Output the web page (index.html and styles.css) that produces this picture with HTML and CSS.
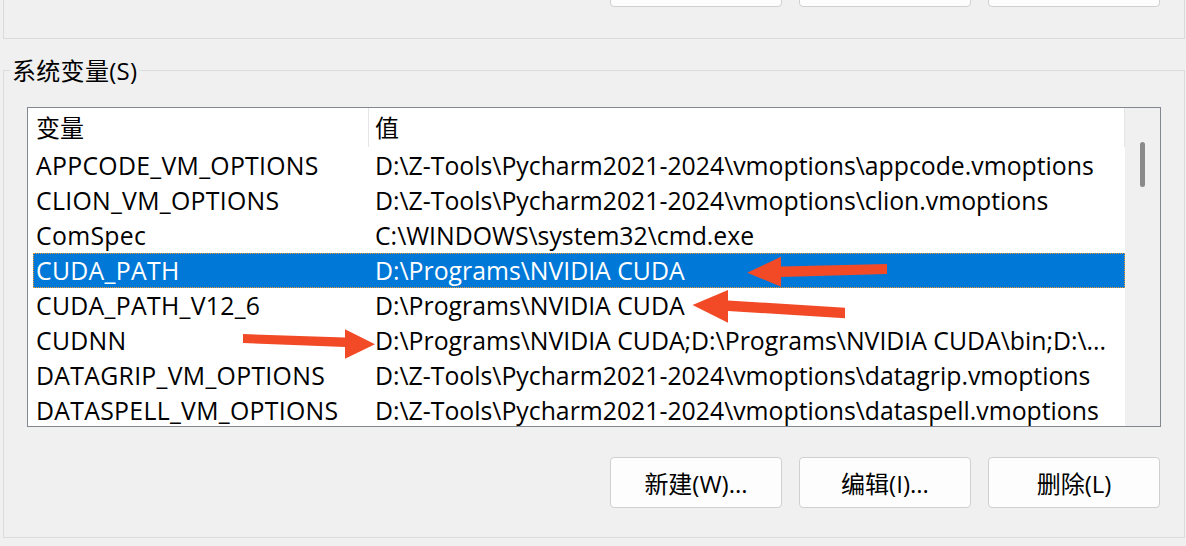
FILE: index.html
```html
<!DOCTYPE html>
<html lang="zh-CN">
<head>
<meta charset="utf-8">
<title>环境变量</title>
<link rel="stylesheet" href="styles.css">
</head>
<body>
<div class="window">
  <div class="user-group">
    <div class="btn-row btn-row-top">
      <button class="btn" aria-label="新建(N)..."></button>
      <button class="btn" aria-label="编辑(E)..."></button>
      <button class="btn" aria-label="删除(D)"></button>
    </div>
  </div>

  <fieldset class="sys-group">
    <legend class="sys-legend">系统变量(S)</legend>
    <div class="list">
      <div class="list-main">
        <div class="list-header">
          <div class="hcell hcell-name">变量</div>
          <div class="hcell hcell-value">值</div>
        </div>
        <div class="list-body">
          <div class="row"><span class="cell cell-name">APPCODE_VM_OPTIONS</span><span class="cell cell-value">D:\Z-Tools\Pycharm2021-2024\vmoptions\appcode.vmoptions</span></div>
          <div class="row"><span class="cell cell-name">CLION_VM_OPTIONS</span><span class="cell cell-value">D:\Z-Tools\Pycharm2021-2024\vmoptions\clion.vmoptions</span></div>
          <div class="row"><span class="cell cell-name">ComSpec</span><span class="cell cell-value">C:\WINDOWS\system32\cmd.exe</span></div>
          <div class="row row-selected"><span class="cell cell-name">CUDA_PATH</span><span class="cell cell-value">D:\Programs\NVIDIA CUDA</span></div>
          <div class="row"><span class="cell cell-name">CUDA_PATH_V12_6</span><span class="cell cell-value">D:\Programs\NVIDIA CUDA</span></div>
          <div class="row"><span class="cell cell-name">CUDNN</span><span class="cell cell-value">D:\Programs\NVIDIA CUDA;D:\Programs\NVIDIA CUDA\bin;D:\...</span></div>
          <div class="row"><span class="cell cell-name">DATAGRIP_VM_OPTIONS</span><span class="cell cell-value">D:\Z-Tools\Pycharm2021-2024\vmoptions\datagrip.vmoptions</span></div>
          <div class="row"><span class="cell cell-name">DATASPELL_VM_OPTIONS</span><span class="cell cell-value">D:\Z-Tools\Pycharm2021-2024\vmoptions\dataspell.vmoptions</span></div>
        </div>
      </div>
      <div class="scrollbar"><div class="thumb"></div></div>
    </div>
    <div class="btn-row btn-row-bottom">
      <button class="btn">新建(W)...</button>
      <button class="btn">编辑(I)...</button>
      <button class="btn">删除(L)</button>
    </div>
  </fieldset>

  <svg class="annotations" width="1186" height="546" viewBox="0 0 1186 546" aria-hidden="true">
    <polygon class="arrow" points="887,264 781,266.5 781,256.7 747.3,272.7 781,286.7 781,277 887,274"/>
    <polygon class="arrow" points="845,307.7 728,300.5 728,290 692.5,305 728,322.7 728,311 845,318.3"/>
    <polygon class="arrow" points="243,334 345,337.5 345,329.3 375,344.3 345,358.7 345,347 243,343"/>
  </svg>
</div>
</body>
</html>
```

FILE: styles.css
```css
* {
  box-sizing: border-box;
}

html, body {
  margin: 0;
  padding: 0;
}

body {
  background: #f0f0f0;
  font-family: "Open Sans", "Noto Sans CJK SC", sans-serif;
  font-size: 24.8px;
  color: #000;
  overflow: hidden;
}

.window {
  position: relative;
  width: 1186px;
  height: 546px;
  overflow: hidden;
}

/* upper (user variables) group, mostly scrolled out of view */
.user-group {
  display: flow-root;
  margin-left: 3px;
  width: 1182px;
  height: 39px;
  border: 1px solid #dadada;
  border-top: none;
}

.btn-row {
  display: flex;
  justify-content: flex-end;
  gap: 17px;
  padding-right: 24px;
}

.btn-row-top {
  margin-top: -44px;
}

.btn {
  width: 172px;
  height: 51px;
  background: #fdfdfd;
  border: 1px solid #d0d0d0;
  border-radius: 4px;
  font-family: "Open Sans", "Noto Sans CJK SC", sans-serif;
  font-size: 24px;
  color: #000;
  padding: 0;
}

/* system variables group */
.sys-group {
  margin: 18px 0 0 3px;
  width: 1182px;
  min-width: 0;
  padding: 0 0 29px 0;
  border: 1px solid #dcdcdc;
}

.sys-legend {
  margin-left: 6px;
  padding: 0 2px;
  height: 27px;
  line-height: 27px;
  font-size: 24px;
  letter-spacing: 0.3px;
}

.list {
  display: flex;
  margin: 23px 0 0 23px;
  width: 1134px;
  height: 320px;
  border: 1px solid #828790;
  background: #fff;
}

.list-main {
  flex: 1;
  min-width: 0;
  overflow: hidden;
}

.list-header {
  display: flex;
  height: 40px;
  font-size: 24px;
}

.hcell {
  height: 39px;
  line-height: 40px;
  border-right: 1px solid #e5e5e5;
}

.hcell-name {
  width: 341px;
  padding-left: 8px;
}

.hcell-value {
  flex: 1;
  padding-left: 6px;
}

.list-body {
  padding-left: 5px;
}

.row {
  display: flex;
  height: 35px;
  line-height: 35px;
  white-space: nowrap;
}

.cell {
  overflow: hidden;
}

.cell-name {
  width: 335px;
  flex: none;
  padding-left: 3px;
  letter-spacing: 0.3px;
}

.cell-value {
  flex: 1;
  min-width: 0;
  padding-left: 7px;
  text-overflow: ellipsis;
}

.row-selected {
  background: #0078d7;
  color: #fff;
  outline: 1px dotted #f59a2c;
  outline-offset: -1px;
}

.scrollbar {
  width: 35px;
  flex: none;
  background: #f0f0f0;
}

.thumb {
  margin: 34px 0 0 15px;
  width: 5px;
  height: 45px;
  border-radius: 3px;
  background: #8a8a8a;
}

.btn-row-bottom {
  margin-top: 30px;
}

.annotations {
  position: absolute;
  left: 0;
  top: 0;
  pointer-events: none;
}

.arrow {
  fill: #f24a26;
}
```
